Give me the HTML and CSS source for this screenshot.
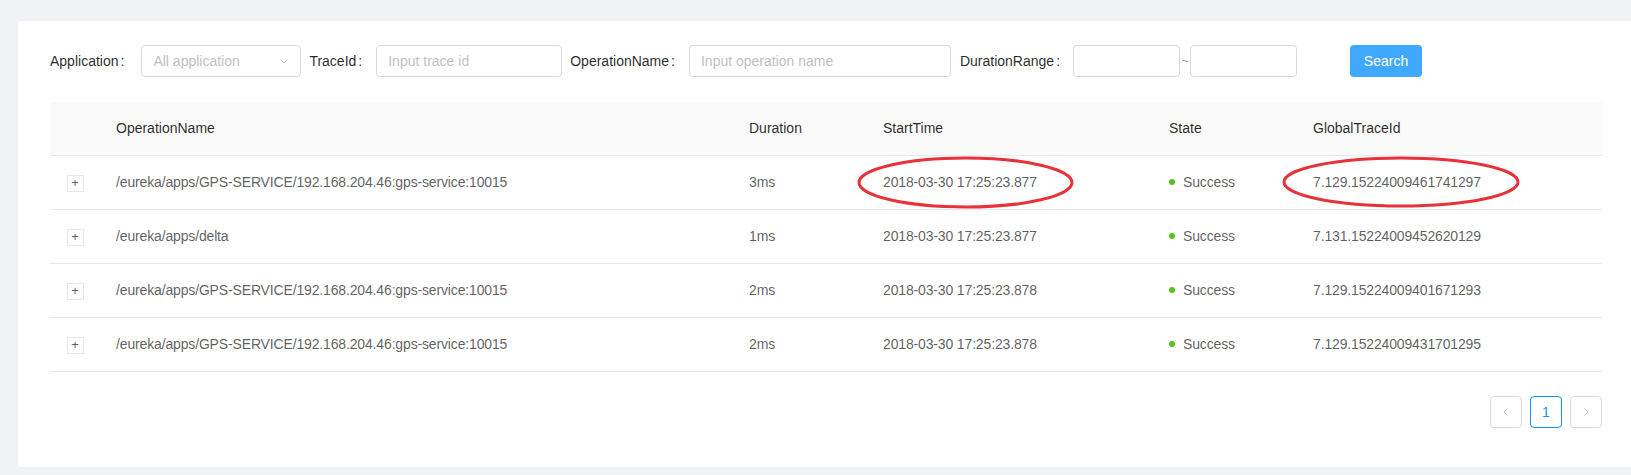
FILE: index.html
```html
<!DOCTYPE html>
<html lang="en">
<head>
  <meta charset="UTF-8">
  <title>Trace</title>
  <link rel="stylesheet" href="styles.css">
</head>
<body>
  <div class="card">
    <!-- Filters -->
    <form class="filters">
      <label class="field-label">Application<span class="colon">:</span></label>
      <div class="select select-app">
        <span class="placeholder">All application</span>
        <svg class="select-arrow" width="10" height="10" viewBox="0 0 10 10"><polyline points="1.5,3.5 5,7 8.5,3.5" fill="none" stroke="#bfbfbf" stroke-width="1"/></svg>
      </div>
      <label class="field-label">TraceId<span class="colon">:</span></label>
      <input class="input input-trace" placeholder="Input trace id">
      <label class="field-label">OperationName<span class="colon">:</span></label>
      <input class="input input-op" placeholder="Input operation name">
      <label class="field-label">DurationRange<span class="colon">:</span></label>
      <input class="input input-range">
      <span class="tilde">~</span>
      <input class="input input-range">
      <button type="button" class="btn-primary">Search</button>
    </form>

    <!-- Trace table -->
    <table class="trace-table">
      <colgroup>
        <col style="width:50px">
        <col style="width:633px">
        <col style="width:134px">
        <col style="width:286px">
        <col style="width:144px">
        <col style="width:305px">
      </colgroup>
      <thead>
        <tr>
          <th></th>
          <th>OperationName</th>
          <th>Duration</th>
          <th>StartTime</th>
          <th>State</th>
          <th>GlobalTraceId</th>
        </tr>
      </thead>
      <tbody>
        <tr>
          <td class="expand"><span class="expand-icon">+</span></td>
          <td>/eureka/apps/GPS-SERVICE/192.168.204.46:gps-service:10015</td>
          <td>3ms</td>
          <td class="marked">2018-03-30 17:25:23.877
            <svg class="mark mark-time" viewBox="0 0 217 53" preserveAspectRatio="none"><ellipse cx="108.5" cy="26.5" rx="106.5" ry="24.5"/></svg>
          </td>
          <td><span class="dot"></span>Success</td>
          <td class="marked">7.129.15224009461741297
            <svg class="mark mark-id" viewBox="0 0 238 52" preserveAspectRatio="none"><ellipse cx="119" cy="26" rx="117" ry="24"/></svg>
          </td>
        </tr>
        <tr>
          <td class="expand"><span class="expand-icon">+</span></td>
          <td>/eureka/apps/delta</td>
          <td>1ms</td>
          <td>2018-03-30 17:25:23.877</td>
          <td><span class="dot"></span>Success</td>
          <td>7.131.15224009452620129</td>
        </tr>
        <tr>
          <td class="expand"><span class="expand-icon">+</span></td>
          <td>/eureka/apps/GPS-SERVICE/192.168.204.46:gps-service:10015</td>
          <td>2ms</td>
          <td>2018-03-30 17:25:23.878</td>
          <td><span class="dot"></span>Success</td>
          <td>7.129.15224009401671293</td>
        </tr>
        <tr>
          <td class="expand"><span class="expand-icon">+</span></td>
          <td>/eureka/apps/GPS-SERVICE/192.168.204.46:gps-service:10015</td>
          <td>2ms</td>
          <td>2018-03-30 17:25:23.878</td>
          <td><span class="dot"></span>Success</td>
          <td>7.129.15224009431701295</td>
        </tr>
      </tbody>
    </table>

    <!-- Pagination -->
    <ul class="pagination">
      <li class="page-item disabled">
        <svg width="10" height="10" viewBox="0 0 10 10"><polyline points="6.5,1.5 3,5 6.5,8.5" fill="none" stroke="#c8c8c8" stroke-width="1"/></svg>
      </li>
      <li class="page-item active">1</li>
      <li class="page-item disabled">
        <svg width="10" height="10" viewBox="0 0 10 10"><polyline points="3.5,1.5 7,5 3.5,8.5" fill="none" stroke="#c8c8c8" stroke-width="1"/></svg>
      </li>
    </ul>
  </div>
</body>
</html>
```

FILE: styles.css
```css
body {
  margin: 0;
  padding: 0 0 8px;
  background-color: #f0f2f5;
  font-family: "Liberation Sans", Arial, sans-serif;
  font-size: 14px;
  color: rgba(0, 0, 0, 0.65);
  overflow: hidden;
}

.card {
  margin: 21px 0 0 18px;
  padding: 24px 29px 39px 32px;
  background: #fff;
  border-radius: 2px 0 0 2px;
}

/* filters */

.filters {
  display: flex;
  align-items: center;
  height: 32px;
}

.field-label {
  color: rgba(0, 0, 0, 0.85);
  white-space: nowrap;
}

.colon {
  margin: 0 0 0 2px;
}

.select,
.input {
  box-sizing: border-box;
  height: 32px;
  border: 1px solid #d9d9d9;
  border-radius: 4px;
  background: #fff;
  font-family: inherit;
  font-size: 14px;
  color: rgba(0, 0, 0, 0.65);
  padding: 0 11px;
  outline: none;
}

.input::placeholder,
.placeholder {
  color: #bfbfbf;
}

.select {
  display: flex;
  align-items: center;
  justify-content: space-between;
}

.select-app {
  width: 160px;
  margin: 0 8px 0 17px;
}

.input-trace {
  width: 186px;
  margin: 0 8px 0 14px;
}

.input-op {
  width: 262px;
  margin: 0 9px 0 14px;
}

.input-range {
  width: 107px;
  padding: 0 6px;
}

.filters .field-label + .input-range {
  margin-left: 13px;
}

.tilde {
  width: 10px;
  text-align: center;
  font-size: 12px;
  color: rgba(0, 0, 0, 0.45);
}

.btn-primary {
  height: 32px;
  width: 72px;
  margin-left: 53px;
  border: none;
  border-radius: 4px;
  background-color: #40a9ff;
  color: #fff;
  font-family: inherit;
  font-size: 14px;
  cursor: pointer;
}

/* table */

.trace-table {
  width: 100%;
  margin-top: 25px;
  border-collapse: collapse;
  table-layout: fixed;
}

.trace-table th,
.trace-table td {
  padding: 16px;
  line-height: 21px;
  text-align: left;
  border-bottom: 1px solid #e8e8e8;
  white-space: nowrap;
}

.trace-table th {
  background: #fafafa;
  font-weight: 500;
  color: rgba(0, 0, 0, 0.85);
}

.trace-table td {
  letter-spacing: -0.15px;
}

.trace-table td.expand {
  padding: 0;
  text-align: center;
}

.expand-icon {
  display: inline-block;
  box-sizing: border-box;
  width: 17px;
  height: 17px;
  border: 1px solid #e8e8e8;
  line-height: 14px;
  font-size: 13px;
  text-align: center;
  vertical-align: middle;
  color: rgba(0, 0, 0, 0.65);
}

.dot {
  display: inline-block;
  width: 6px;
  height: 6px;
  border-radius: 50%;
  background: #52c41a;
  margin-right: 8px;
  vertical-align: middle;
  position: relative;
  top: -1px;
}

.marked {
  position: relative;
}

.mark {
  position: absolute;
  top: 0;
  fill: none;
  stroke: #e8323a;
  stroke-width: 3;
  pointer-events: none;
}

.mark-time {
  left: -10px;
  width: 217px;
  height: 53px;
}

.mark-id {
  left: -15px;
  width: 238px;
  height: 52px;
}

/* pagination */

.pagination {
  display: flex;
  justify-content: flex-end;
  gap: 8px;
  margin: 24px 0 0;
  padding: 0;
  list-style: none;
}

.page-item {
  box-sizing: border-box;
  width: 32px;
  height: 32px;
  display: flex;
  align-items: center;
  justify-content: center;
  border: 1px solid #d9d9d9;
  border-radius: 4px;
  color: rgba(0, 0, 0, 0.65);
}

.page-item.active {
  border-color: #1890ff;
  color: #1890ff;
}
```
